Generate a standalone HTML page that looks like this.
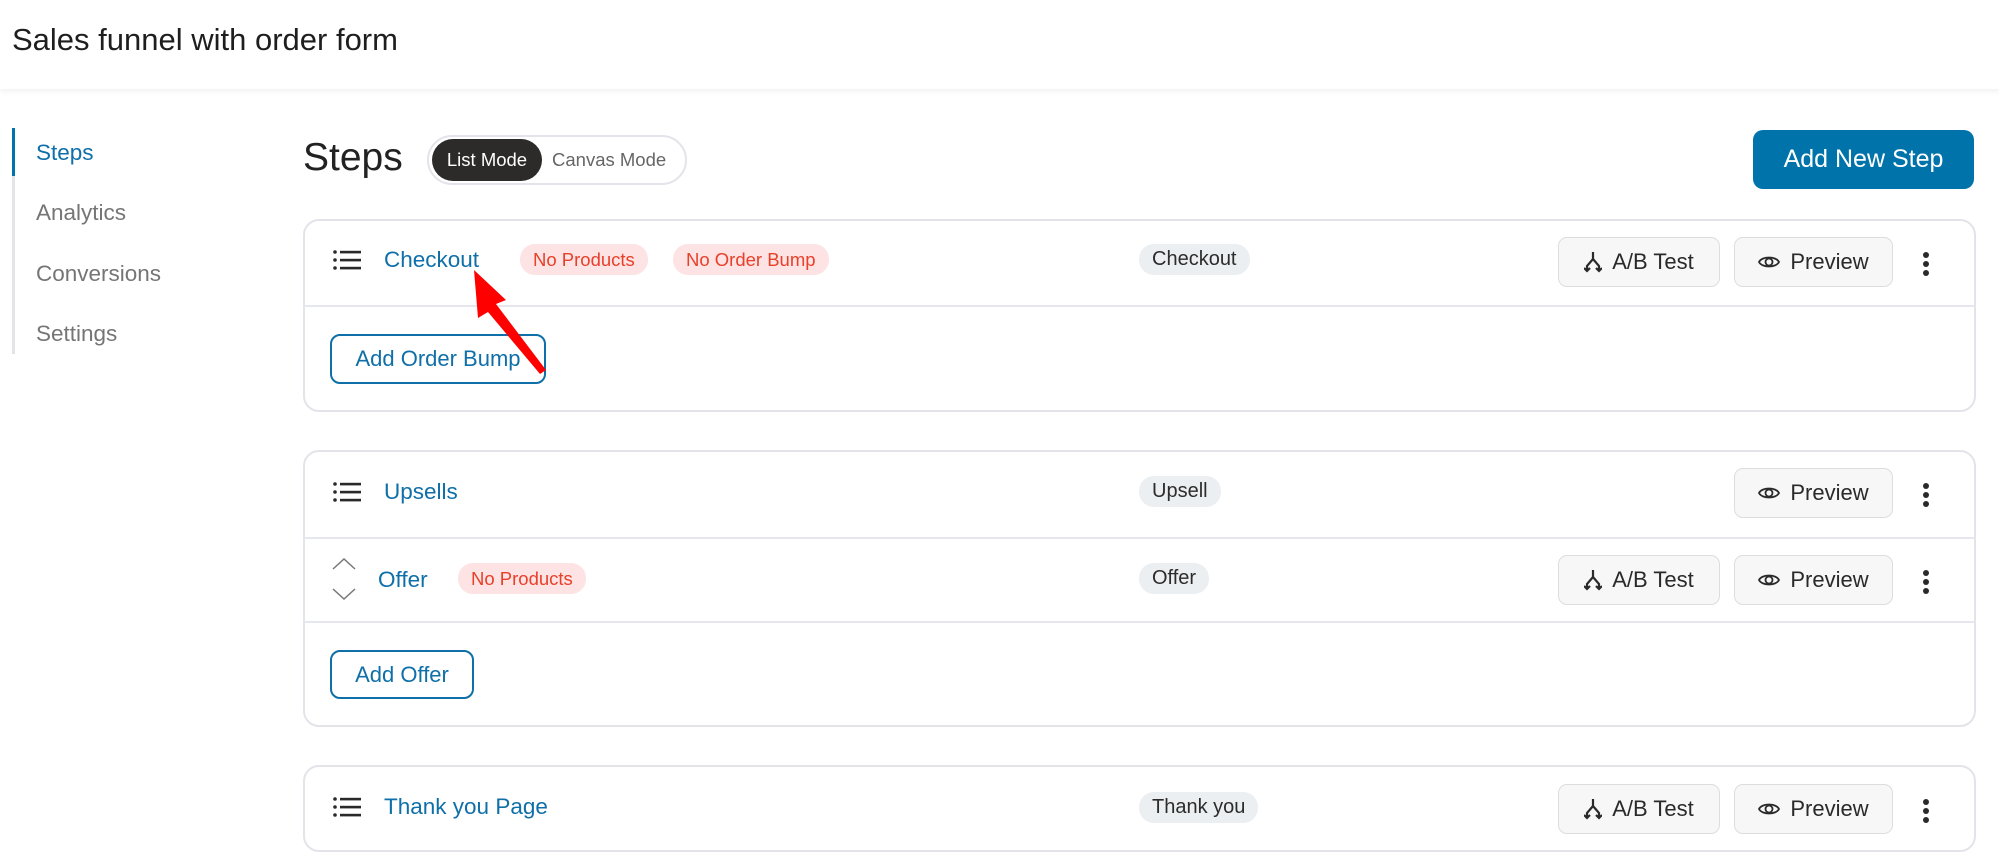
<!DOCTYPE html>
<html><head><style>
*{box-sizing:border-box;margin:0;padding:0}
body{width:1999px;height:864px;background:#fff;font-family:"Liberation Sans",Arial,sans-serif;position:relative;overflow:hidden;color:#1e1e1e}
.a{position:absolute}
.hdr{left:0;top:0;width:1999px;height:89px;background:#fff;box-shadow:0 2px 6px rgba(0,0,0,.07)}
.title{left:12px;top:22px;font-size:31px;color:#1e1e1e}
.side{left:12px;top:128px;width:3px;height:226px;background:#e2e4e7}
.sideact{left:12px;top:128px;width:3px;height:48px;background:#0073aa}
.nav{left:36px;font-size:22.5px;color:#757575}
.card{left:303px;width:1673px;border:2px solid #e3e3ea;border-radius:16px;background:#fff}
.hl{left:303px;width:1673px;height:2px;background:#e6e6ee}
.link{font-size:22.5px;color:#0f6fa8}
.pill{height:31px;line-height:31px;border-radius:15px;font-size:18.5px;padding:0 13px}
.red{background:#fde3e3;color:#e8402a}
.gray{background:#eceff1;color:#2c2c2c;font-size:20px}
.btn{height:50px;border:1px solid #ddd;border-radius:9px;background:#f7f7f7;font-size:22px;color:#2a2a2a;display:flex;align-items:center;justify-content:center;gap:10px}
.obtn{border:2px solid #0f6fa8;border-radius:10px;color:#0f6fa8;font-size:22px;display:flex;align-items:center;justify-content:center;background:#fff}
.dots{width:6px}
.dots i{display:block;width:6px;height:6px;border-radius:3px;background:#2a2a2a;margin-bottom:3px}
</style></head><body>
<div class="a hdr"></div>
<div class="a title">Sales funnel with order form</div>
<div class="a side"></div><div class="a sideact"></div>
<div class="a nav" style="top:140px;color:#0f6fa8">Steps</div>
<div class="a nav" style="top:200px">Analytics</div>
<div class="a nav" style="top:261px">Conversions</div>
<div class="a nav" style="top:321px">Settings</div>

<div class="a" style="left:303px;top:136px;font-size:39px;color:#222">Steps</div>
<div class="a" style="left:427px;top:135px;width:260px;height:50px;border:2px solid #e3e3ea;border-radius:25px"></div>
<div class="a" style="left:432px;top:139px;width:110px;height:42px;border-radius:21px;background:#2d2a2a;color:#fff;font-size:18.5px;line-height:42px;text-align:center">List Mode</div>
<div class="a" style="left:552px;top:139px;font-size:18.5px;line-height:42px;color:#666">Canvas Mode</div>
<div class="a" style="left:1753px;top:130px;width:221px;height:59px;border-radius:10px;background:#0073aa;color:#fff;font-size:25px;line-height:59px;text-align:center">Add New Step</div>

<svg width="0" height="0" style="position:absolute"><defs>
<g id="ham"><circle cx="2" cy="2" r="1.8"/><circle cx="2" cy="10" r="1.8"/><circle cx="2" cy="18" r="1.8"/><rect x="7" y="0.8" width="21" height="2.6"/><rect x="7" y="8.8" width="21" height="2.6"/><rect x="7" y="16.8" width="21" height="2.6"/></g>
<g id="ab" fill="none" stroke="#2a2a2a" stroke-width="2.2"><path d="M9 1v7M9 8L3 15v5M9 8l6 7v5M0 17l3 3 3-3M12 17l3 3 3-3"/></g>
<g id="eye" fill="none" stroke="#2a2a2a" stroke-width="1.8"><path d="M1 8C4 2 18 2 21 8C18 14 4 14 1 8Z"/><circle cx="11" cy="8" r="3.5"/></g>
</defs></svg>

<!-- card 1 -->
<div class="a card" style="top:219px;height:193px"></div>
<div class="a hl" style="top:305px"></div>
<svg class="a" style="left:333px;top:250px" width="30" height="22" fill="#2a2a2a"><use href="#ham"/></svg>
<div class="a link" style="left:384px;top:247px">Checkout</div>
<div class="a pill red" style="left:520px;top:244px">No Products</div>
<div class="a pill red" style="left:673px;top:244px">No Order Bump</div>
<div class="a pill gray" style="left:1139px;top:244px">Checkout</div>
<div class="a btn" style="left:1558px;top:237px;width:162px"><svg width="18" height="22"><use href="#ab"/></svg>A/B Test</div>
<div class="a btn" style="left:1734px;top:237px;width:159px"><svg width="22" height="16"><use href="#eye"/></svg>Preview</div>
<div class="a dots" style="left:1923px;top:252px"><i></i><i></i><i></i></div>
<div class="a obtn" style="left:330px;top:334px;width:216px;height:50px">Add Order Bump</div>
<svg class="a" style="left:440px;top:260px" width="120" height="120"><polygon points="34,10 66,40 56,44 106,110 100,114 48,52 38,58" fill="#f00"/></svg>

<!-- card 2 -->
<div class="a card" style="top:450px;height:277px"></div>
<div class="a hl" style="top:537px"></div>
<div class="a hl" style="top:621px"></div>
<svg class="a" style="left:333px;top:482px" width="30" height="22" fill="#2a2a2a"><use href="#ham"/></svg>
<div class="a link" style="left:384px;top:479px">Upsells</div>
<div class="a pill gray" style="left:1139px;top:476px">Upsell</div>
<div class="a btn" style="left:1734px;top:468px;width:159px"><svg width="22" height="16"><use href="#eye"/></svg>Preview</div>
<div class="a dots" style="left:1923px;top:483px"><i></i><i></i><i></i></div>
<svg class="a" style="left:332px;top:557px" width="24" height="44" fill="none" stroke="#777" stroke-width="1.5"><path d="M1 12L12 2l11 10M1 32l11 10 11-10"/></svg>
<div class="a link" style="left:378px;top:567px">Offer</div>
<div class="a pill red" style="left:458px;top:563px">No Products</div>
<div class="a pill gray" style="left:1139px;top:563px">Offer</div>
<div class="a btn" style="left:1558px;top:555px;width:162px"><svg width="18" height="22"><use href="#ab"/></svg>A/B Test</div>
<div class="a btn" style="left:1734px;top:555px;width:159px"><svg width="22" height="16"><use href="#eye"/></svg>Preview</div>
<div class="a dots" style="left:1923px;top:570px"><i></i><i></i><i></i></div>
<div class="a obtn" style="left:330px;top:650px;width:144px;height:49px">Add Offer</div>

<!-- card 3 -->
<div class="a card" style="top:765px;height:87px"></div>
<svg class="a" style="left:333px;top:797px" width="30" height="22" fill="#2a2a2a"><use href="#ham"/></svg>
<div class="a link" style="left:384px;top:794px">Thank you Page</div>
<div class="a pill gray" style="left:1139px;top:792px">Thank you</div>
<div class="a btn" style="left:1558px;top:784px;width:162px"><svg width="18" height="22"><use href="#ab"/></svg>A/B Test</div>
<div class="a btn" style="left:1734px;top:784px;width:159px"><svg width="22" height="16"><use href="#eye"/></svg>Preview</div>
<div class="a dots" style="left:1923px;top:799px"><i></i><i></i><i></i></div>
</body></html>
